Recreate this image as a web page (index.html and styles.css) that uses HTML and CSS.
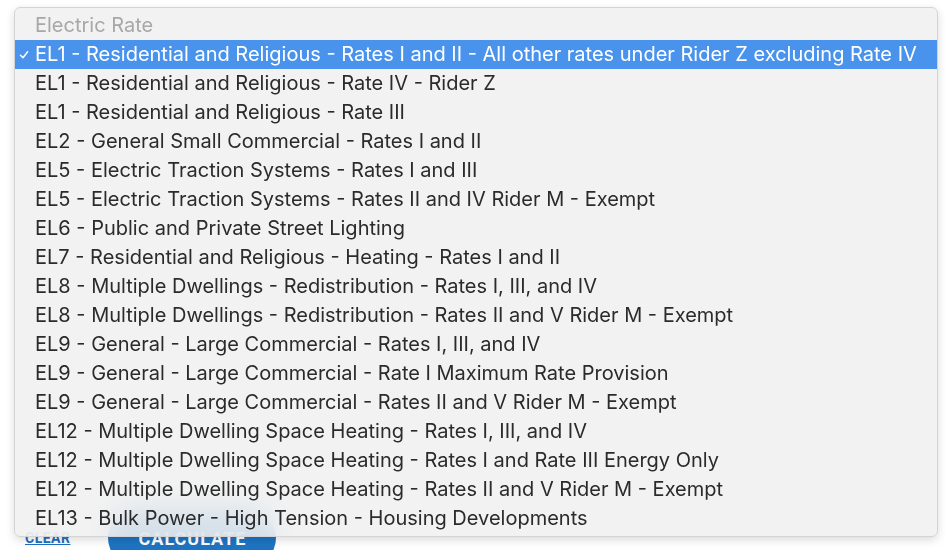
FILE: index.html
```html
<!DOCTYPE html>
<html lang="en">
<head>
<meta charset="utf-8">
<title>Electric Rate</title>
<link rel="stylesheet" href="styles.css">
</head>
<body>
<main class="page">
  <div class="actions">
    <a class="clear" href="#">CLEAR</a>
    <button class="calc" type="button">CALCULATE</button>
  </div>
</main>
<div class="menu" role="listbox">
  <div class="item header">Electric Rate</div>
  <div class="item selected"><svg class="check" width="10" height="10" viewBox="0 0 10 10"><path d="M1.5 5.2 L4 7.8 L8.6 1.8" fill="none" stroke="#fff" stroke-width="1.5" stroke-linecap="round" stroke-linejoin="round"/></svg>EL1 - Residential and Religious - Rates I and II - All other rates under Rider Z excluding Rate IV</div>
  <div class="item">EL1 - Residential and Religious - Rate IV - Rider Z</div>
  <div class="item">EL1 - Residential and Religious - Rate III</div>
  <div class="item">EL2 - General Small Commercial - Rates I and II</div>
  <div class="item">EL5 - Electric Traction Systems - Rates I and III</div>
  <div class="item">EL5 - Electric Traction Systems - Rates II and IV Rider M - Exempt</div>
  <div class="item">EL6 - Public and Private Street Lighting</div>
  <div class="item">EL7 - Residential and Religious - Heating - Rates I and II</div>
  <div class="item">EL8 - Multiple Dwellings - Redistribution - Rates I, III, and IV</div>
  <div class="item">EL8 - Multiple Dwellings - Redistribution - Rates II and V Rider M - Exempt</div>
  <div class="item">EL9 - General - Large Commercial - Rates I, III, and IV</div>
  <div class="item">EL9 - General - Large Commercial - Rate I Maximum Rate Provision</div>
  <div class="item">EL9 - General - Large Commercial - Rates II and V Rider M - Exempt</div>
  <div class="item">EL12 - Multiple Dwelling Space Heating - Rates I, III, and IV</div>
  <div class="item">EL12 - Multiple Dwelling Space Heating - Rates I and Rate III Energy Only</div>
  <div class="item">EL12 - Multiple Dwelling Space Heating - Rates II and V Rider M - Exempt</div>
  <div class="item">EL13 - Bulk Power - High Tension - Housing Developments</div>
</div>
</body>
</html>
```
FILE: styles.css
```css
html, body {
  margin: 0;
  padding: 0;
  background: #ffffff;
  overflow: hidden;
  height: 550px;
}

.page {
  padding: 510px 0 0 25px;
  font-family: "Roboto", "Liberation Sans", sans-serif;
}

.actions {
  display: flex;
  align-items: center;
  gap: 38px;
}

.clear {
  color: #1f6fbf;
  font-size: 14px;
  font-weight: 700;
  text-decoration: underline;
  letter-spacing: 0.5px;
}

.calc {
  width: 168px;
  height: 56px;
  border: none;
  border-radius: 28px;
  background: #1e74c2;
  color: #ffffff;
  font-family: "Roboto", "Liberation Sans", sans-serif;
  font-size: 18px;
  font-weight: 700;
  letter-spacing: 1px;
}

.menu {
  position: absolute;
  left: 14px;
  top: 7px;
  width: 924px;
  height: 530px;
  box-sizing: border-box;
  padding: 3px 0;
  border: 1px solid #d4d4d4;
  border-radius: 6px;
  background: rgba(240, 240, 240, 0.86);
  backdrop-filter: blur(14px);
  -webkit-backdrop-filter: blur(14px);
  box-shadow: 0 3px 10px rgba(0, 0, 0, 0.14);
  font-family: "Inter", "Noto Sans", sans-serif;
  font-size: 20px;
  color: #2b2b2b;
}

.item {
  position: relative;
  height: 29px;
  line-height: 29px;
  padding-left: 20px;
  white-space: nowrap;
}

.header {
  color: #a8a8a8;
}

.selected {
  background: #4a93ec;
  color: #ffffff;
}

.check {
  position: absolute;
  left: 4px;
  top: 10px;
}
```
